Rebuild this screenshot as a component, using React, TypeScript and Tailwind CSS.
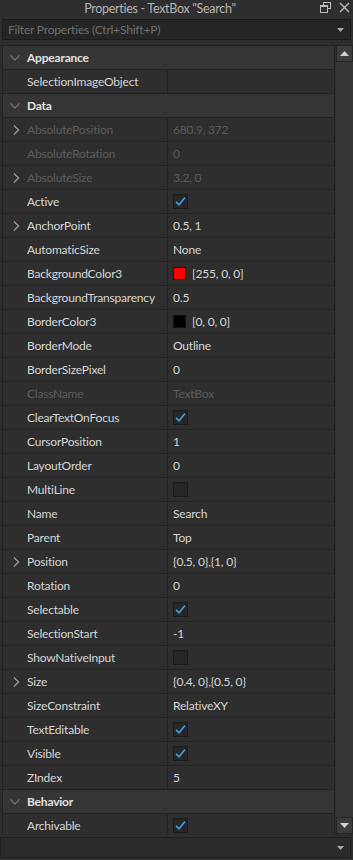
import React from "react";

type Row =
  | { kind: "header"; label: string }
  | {
      kind: "prop";
      name: string;
      value?: string;
      disabled?: boolean;
      expand?: boolean;
      check?: boolean;
      swatch?: string;
    };

const rows: Row[] = [
  { kind: "header", label: "Appearance" },
  { kind: "prop", name: "SelectionImageObject", value: "" },
  { kind: "header", label: "Data" },
  { kind: "prop", name: "AbsolutePosition", value: "680.9, 372", disabled: true, expand: true },
  { kind: "prop", name: "AbsoluteRotation", value: "0", disabled: true },
  { kind: "prop", name: "AbsoluteSize", value: "3.2, 0", disabled: true, expand: true },
  { kind: "prop", name: "Active", check: true },
  { kind: "prop", name: "AnchorPoint", value: "0.5, 1", expand: true },
  { kind: "prop", name: "AutomaticSize", value: "None" },
  { kind: "prop", name: "BackgroundColor3", value: "[255, 0, 0]", swatch: "#ff0000" },
  { kind: "prop", name: "BackgroundTransparency", value: "0.5" },
  { kind: "prop", name: "BorderColor3", value: "[0, 0, 0]", swatch: "#000000" },
  { kind: "prop", name: "BorderMode", value: "Outline" },
  { kind: "prop", name: "BorderSizePixel", value: "0" },
  { kind: "prop", name: "ClassName", value: "TextBox", disabled: true },
  { kind: "prop", name: "ClearTextOnFocus", check: true },
  { kind: "prop", name: "CursorPosition", value: "1" },
  { kind: "prop", name: "LayoutOrder", value: "0" },
  { kind: "prop", name: "MultiLine", check: false },
  { kind: "prop", name: "Name", value: "Search" },
  { kind: "prop", name: "Parent", value: "Top" },
  { kind: "prop", name: "Position", value: "{0.5, 0},{1, 0}", expand: true },
  { kind: "prop", name: "Rotation", value: "0" },
  { kind: "prop", name: "Selectable", check: true },
  { kind: "prop", name: "SelectionStart", value: "-1" },
  { kind: "prop", name: "ShowNativeInput", check: false },
  { kind: "prop", name: "Size", value: "{0.4, 0},{0.5, 0}", expand: true },
  { kind: "prop", name: "SizeConstraint", value: "RelativeXY" },
  { kind: "prop", name: "TextEditable", check: true },
  { kind: "prop", name: "Visible", check: true },
  { kind: "prop", name: "ZIndex", value: "5" },
  { kind: "header", label: "Behavior" },
  { kind: "prop", name: "Archivable", check: true },
];

function ChevronRight() {
  return (
    <svg width="8" height="12" viewBox="0 0 8 12">
      <path d="M2 1.5 L6.5 6 L2 10.5" stroke="#9a9a9a" strokeWidth="1.4" fill="none" />
    </svg>
  );
}

function ChevronDown() {
  return (
    <svg width="12" height="8" viewBox="0 0 12 8">
      <path d="M1.5 1.5 L6 6 L10.5 1.5" stroke="#6e6e6e" strokeWidth="1.4" fill="none" />
    </svg>
  );
}

function Check({ on }: { on: boolean }) {
  return (
    <div className="w-[15px] h-[15px] bg-[#262626] border border-[#1a1a1a] flex items-center justify-center">
      {on && (
        <svg width="13" height="13" viewBox="0 0 13 13">
          <path d="M2 6.8 L5 9.8 L11 2.5" stroke="#3a9de6" strokeWidth="1.7" fill="none" />
        </svg>
      )}
    </div>
  );
}

function PropRow({ r }: { r: Extract<Row, { kind: "prop" }> }) {
  const textColor = r.disabled ? "text-[#5c5c5c]" : "text-[#d6d6d6]";
  return (
    <div className="flex h-[24px] shrink-0 border-b border-[#222222] bg-[#2e2e2e]">
      <div className="w-[24px] flex items-center justify-center pl-[1px]">
        {r.expand && <ChevronRight />}
      </div>
      <div className={`w-[141px] flex items-center border-r border-[#222222] ${textColor}`}>
        {r.name}
      </div>
      <div className={`flex-1 flex items-center pl-[5px] ${textColor}`}>
        {r.check !== undefined ? (
          <Check on={r.check} />
        ) : r.swatch ? (
          <div className="flex items-center gap-[6px]">
            <div
              className="w-[13px] h-[13px] border border-[#111111]"
              style={{ background: r.swatch }}
            />
            <span>{r.value}</span>
          </div>
        ) : (
          <span>{r.value}</span>
        )}
      </div>
    </div>
  );
}

function HeaderRow({ label }: { label: string }) {
  return (
    <div className="flex h-[24px] shrink-0 border-b border-[#222222] bg-[#353535]">
      <div className="w-[24px] flex items-center justify-center">
        <ChevronDown />
      </div>
      <div className="flex items-center font-bold text-[#e2e2e2]">{label}</div>
    </div>
  );
}

export default function App() {
  return (
    <div
      className="w-[353px] h-[860px] bg-[#2e2e2e] flex flex-col overflow-hidden text-[12px] tracking-[-0.2px]"
      style={{ fontFamily: "Lato, 'Noto Sans', sans-serif" }}
    >
      {/* Title bar */}
      <div className="relative h-[19px] shrink-0 flex items-center justify-center text-[#b4b4b4] text-[12.5px] tracking-[-0.3px]">
        <span className="mr-[33px]">Properties - TextBox "Search"</span>
        <div className="absolute right-[3px] top-[2px] flex items-center gap-[8px]">
          <svg width="11" height="11" viewBox="0 0 11 11">
            <rect x="3.5" y="0.5" width="7" height="6" stroke="#bdbdbd" fill="none" />
            <rect x="0.5" y="3.5" width="7" height="7" stroke="#bdbdbd" fill="#2e2e2e" />
            <line x1="0.5" y1="4.5" x2="7.5" y2="4.5" stroke="#bdbdbd" />
          </svg>
          <svg width="11" height="11" viewBox="0 0 11 11">
            <path d="M1 1 L10 10 M10 1 L1 10" stroke="#bdbdbd" strokeWidth="1.4" />
          </svg>
        </div>
      </div>
      {/* Filter */}
      <div className="mx-[2px] h-[21px] shrink-0 bg-[#252525] border border-[#1b1b1b] flex items-center justify-between pl-[5px] pr-[6px]">
        <span className="text-[#6f6f6f]">Filter Properties (Ctrl+Shift+P)</span>
        <svg width="7" height="4" viewBox="0 0 7 4">
          <path d="M0 0 L7 0 L3.5 4 Z" fill="#a8a8a8" />
        </svg>
      </div>
      {/* Table + scrollbar */}
      <div className="mt-[5px] h-[789px] shrink-0 flex">
        <div className="ml-[2px] w-[333px] flex flex-col overflow-hidden border-l border-t border-r border-[#222222]">
          {rows.map((r, i) =>
            r.kind === "header" ? (
              <HeaderRow key={i} label={r.label} />
            ) : (
              <PropRow key={i} r={r} />
            )
          )}
        </div>
        <div className="ml-[1px] w-[17px] flex flex-col bg-[#353535]">
          <div className="h-[17px] bg-[#3c3c3c] border border-[#242424] flex items-center justify-center">
            <svg width="9" height="5" viewBox="0 0 9 5">
              <path d="M0 5 L9 5 L4.5 0 Z" fill="#d0d0d0" />
            </svg>
          </div>
          <div className="flex-1" />
          <div className="h-[17px] bg-[#3c3c3c] border border-[#242424] flex items-center justify-center">
            <svg width="9" height="5" viewBox="0 0 9 5">
              <path d="M0 0 L9 0 L4.5 5 Z" fill="#d0d0d0" />
            </svg>
          </div>
        </div>
      </div>
      {/* Bottom bar */}
      <div className="mt-[3px] mr-[2px] h-[21px] shrink-0 bg-[#2b2b2b] border border-[#1e1e1e] flex items-center justify-end pr-[6px]">
        <svg width="7" height="4" viewBox="0 0 7 4">
          <path d="M0 0 L7 0 L3.5 4 Z" fill="#a8a8a8" />
        </svg>
      </div>
    </div>
  );
}
